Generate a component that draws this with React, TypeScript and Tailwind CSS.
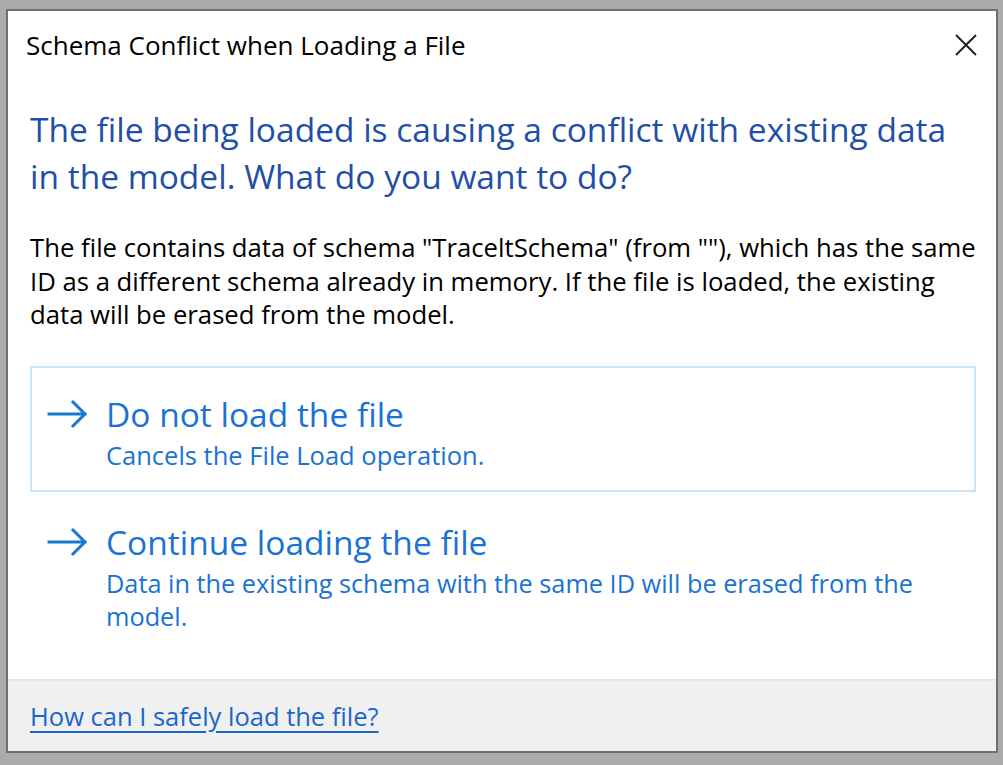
import React from "react";

function Arrow() {
  return (
    <svg width="42" height="30" viewBox="0 0 42 30" className="shrink-0">
      <path d="M2 15 H38 M26 3 L38 15 L26 27" fill="none" stroke="#1a78d4" strokeWidth="3" strokeLinecap="square" />
    </svg>
  );
}

export default function App() {
  return (
    <div
      className="w-[1003px] h-[765px] bg-[#ababab] pt-[9px] pl-[6px] pr-[5px] pb-[12px]"
      style={{ fontFamily: '"Open Sans", "Noto Sans", sans-serif' }}
    >
      <div className="h-full flex flex-col bg-white border-2 border-[#6f6f6f]">
        <div className="flex items-center justify-between pl-[18px] pr-[18px] h-[68px] shrink-0">
          <span className="text-[26px] text-black leading-none">Schema Conflict when Loading a File</span>
          <svg width="24" height="24" viewBox="0 0 24 24">
            <path d="M2 2 L22 22 M22 2 L2 22" stroke="#222" strokeWidth="2" />
          </svg>
        </div>
        <div className="pl-[22px] pr-[10px] pt-[27px]">
          <div className="text-[33.5px] leading-[47px] text-[#1f4fa6] whitespace-nowrap">
            The file being loaded is causing a conflict with existing data
            <br />
            in the model. What do you want to do?
          </div>
          <div className="mt-[31px] text-[25.7px] leading-[33.5px] text-black whitespace-nowrap">
            The file contains data of schema "TraceltSchema" (from ""), which has the same
            <br />
            ID as a different schema already in memory. If the file is loaded, the existing
            <br />
            data will be erased from the model.
          </div>
          <div className="mt-[34px] w-[946px] border-2 border-[#cce4f7] h-[126px] pl-[15px] pt-[21px] flex">
            <div className="h-[50px] flex items-center"><Arrow /></div>
            <div className="pl-[17px]">
              <div className="text-[33.5px] leading-[50px] text-[#1a73d2] whitespace-nowrap">Do not load the file</div>
              <div className="text-[25.5px] leading-[33.5px] text-[#1a73d2] whitespace-nowrap">Cancels the File Load operation.</div>
            </div>
          </div>
          <div className="mt-[2px] w-[946px] border-2 border-transparent pl-[15px] pt-[21px] flex">
            <div className="h-[50px] flex items-center"><Arrow /></div>
            <div className="pl-[17px]">
              <div className="text-[33.5px] leading-[50px] text-[#1a73d2] whitespace-nowrap">Continue loading the file</div>
              <div className="text-[25.3px] leading-[33px] text-[#1a73d2] whitespace-nowrap">
                Data in the existing schema with the same ID will be erased from the
                <br />
                model.
              </div>
            </div>
          </div>
        </div>
        <div className="mt-auto h-[72px] shrink-0 bg-[#f0f0f0] border-t-2 border-[#e6e6e6] flex items-center px-[22px]">
          <a href="#" className="text-[25.5px] text-[#1a66cc] underline underline-offset-[5px]">How can I safely load the file?</a>
        </div>
      </div>
    </div>
  );
}
